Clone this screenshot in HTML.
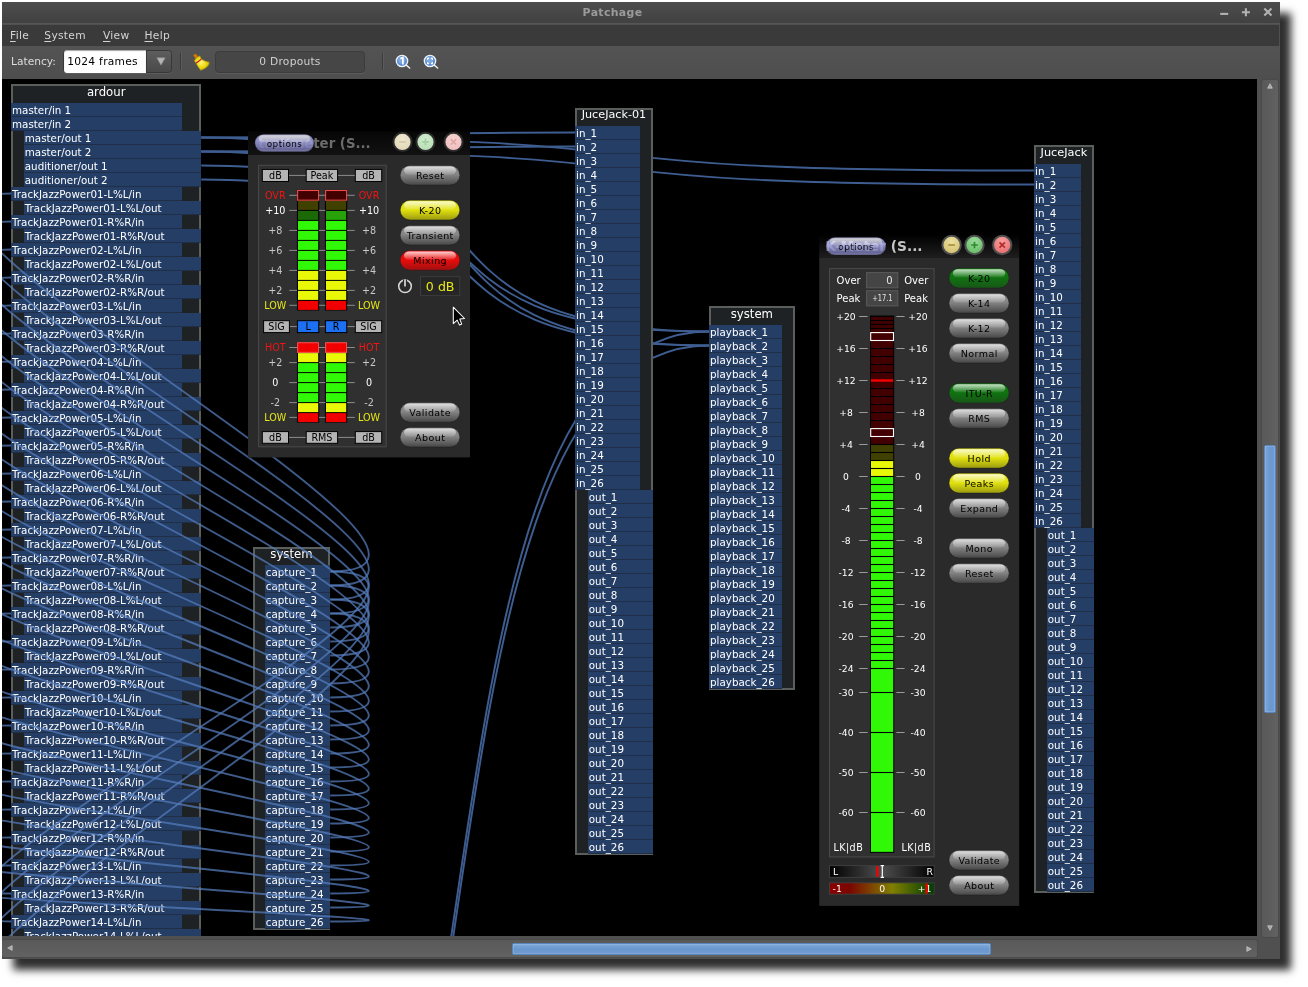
<!DOCTYPE html>
<html><head><meta charset="utf-8"><title>Patchage</title>
<style>
html,body{margin:0;padding:0;background:#fff;}
body{width:1308px;height:987px;overflow:hidden;position:relative;font-family:"DejaVu Sans","Liberation Sans",sans-serif;}
*{box-sizing:border-box;}
.abs{position:absolute;}
#win{position:absolute;left:2px;top:2px;width:1278px;height:957px;background:#505050;box-shadow:11px 11px 8px rgba(0,0,0,.82);overflow:hidden;}
#title{position:absolute;left:0;top:0;width:100%;height:22px;background:linear-gradient(#4d4d4d,#414141);border-bottom:1px solid #555;}
#title .t{position:absolute;left:0;width:1221px;top:3.5px;text-align:center;font-weight:bold;font-size:10.9px;letter-spacing:.35px;color:#9b9b9b;line-height:13px;}
#menubar{position:absolute;left:0;top:23px;width:1277px;height:21px;background:#3a3a3a;}
#menubar span{position:absolute;top:3.8px;font-size:10.67px;line-height:14px;color:#d4d4d4;letter-spacing:.3px;}
#menubar u{text-decoration:underline;text-underline-offset:1.5px;}
#toolbar{position:absolute;left:0;top:44px;width:1278px;height:33px;background:linear-gradient(#535353,#4e4e4e);}
#canvas{position:absolute;left:0px;top:77px;width:1255.3px;height:857px;background:#000;overflow:hidden;}
#cin{position:absolute;left:-2px;top:-79px;width:1308px;height:987px;}
.mod{position:absolute;background:#1e2224;border:2px solid #5b5f5b;}
.mt{position:absolute;left:0;right:0;text-align:center;color:#fff;font-size:11.7px;line-height:14px;white-space:nowrap;}
.p{position:absolute;height:14px;background:#243e66;color:#fff;font-size:10.32px;line-height:15.4px;white-space:nowrap;border-bottom:.9px solid #212e47;padding-left:.9px;overflow:visible;}
.p span{position:relative;z-index:1;}
svg.c{position:absolute;left:0;top:0;}
svg.f{z-index:2;}
svg.c path{fill:none;stroke-width:1.9;}
#cin,#title,#menubar,#toolbar{will-change:transform;}
</style></head><body>

<div id="win">
<div id="title"><div class="t">Patchage</div><svg class="abs" style="left:1210px;top:0" width="68" height="22" viewBox="1210 0 68 22"><g stroke="#b2b2b2" stroke-width="2.1" fill="none"><path d="M1218.2 11.9H1226.2"/><path d="M1239.9 10.3H1247.9M1243.9 6.3V14.3"/><path d="M1262.3 6.4L1269.5 13.6M1269.5 6.4L1262.3 13.6"/></g></svg></div>
<div id="menubar"><span style="left:8px"><u>F</u>ile</span><span style="left:42.3px"><u>S</u>ystem</span><span style="left:101px"><u>V</u>iew</span><span style="left:142.5px"><u>H</u>elp</span></div>
<div id="toolbar"><div class="abs" style="left:9px;top:10.299999999999997px;font-size:10.67px;line-height:12px;color:#dcdcdc">Latency:</div>
<div class="abs" style="left:61.3px;top:3.5px;width:109px;height:23.8px;border-radius:3.5px;background:linear-gradient(#5d5d5d,#4a4a4a);border:1px solid #383838;box-shadow:0 1px 0 rgba(255,255,255,.08)"></div>
<div class="abs" style="left:61.8px;top:4px;width:83.2px;height:22.8px;border-radius:3px 0 0 3px;background:#fff;border-right:1px solid #383838;box-shadow:inset 0 1px 1px rgba(0,0,0,.35)"></div>
<div class="abs" style="left:65.2px;top:9.600000000000001px;font-size:10.67px;line-height:12px;color:#000;letter-spacing:.28px">1024 frames</div>
<svg class="abs" style="left:153.5px;top:11px" width="10" height="9" viewBox="0 0 10 9"><path d="M0.8 0.8H9.2L5 8.2Z" fill="#b4b4b4" stroke="#8a8a8a" stroke-width=".6"/></svg>
<div class="abs" style="left:178px;top:7px;width:1px;height:17px;background:#3b3b3b"></div>
<div class="abs" style="left:179px;top:7px;width:1px;height:17px;background:#5c5c5c"></div>
<div class="abs" style="left:380px;top:7px;width:1px;height:17px;background:#3b3b3b"></div>
<div class="abs" style="left:381px;top:7px;width:1px;height:17px;background:#5c5c5c"></div>
<svg class="abs" style="left:188px;top:5px" width="22" height="22" viewBox="190 51 22 22">
<defs><radialGradient id="bg1" cx=".45" cy=".45" r=".6"><stop offset="0" stop-color="#fff27a"/><stop offset=".6" stop-color="#ecd90e"/><stop offset="1" stop-color="#c4ac00"/></radialGradient></defs>
<path d="M193.4 55.2Q194.6 53.2 196.6 54.6L199.2 58.4L196.6 60.2Z" fill="#d07d0c" stroke="#a65e06" stroke-width=".5"/>
<path d="M194.4 60.6Q196.4 57.4 199.8 56L201.2 59.2Q206 62 209.2 62.4Q209 67.2 200.6 70.2Q197.6 66 196.2 63.4Z" fill="url(#bg1)" stroke="#b9a406" stroke-width=".7"/>
<path d="M196 63.2L201.2 59.2" stroke="#c8201c" stroke-width="1.3" fill="none"/>
</svg>
<div class="abs" style="left:213px;top:5px;width:150px;height:22px;border-radius:3.5px;background:#464646;border:1px solid #3c3c3c;box-shadow:0 1px 0 rgba(255,255,255,.07);text-align:center;font-size:10.67px;line-height:19.5px;color:#cfcfcf;letter-spacing:.25px">0 Dropouts</div>
<svg class="abs" style="left:391px;top:6px" width="20" height="20" viewBox="393 52 20 20">
<path d="M406.3 65.2L409.6 68" stroke="#e8e8e8" stroke-width="1.6" stroke-linecap="round"/>
<circle cx="402" cy="61" r="5.7" fill="#5d8ed2" stroke="#eef2f8" stroke-width="1.3"/>
<circle cx="401.7" cy="60.2" r="3.6" fill="#9dc0ea" opacity=".55"/>
<path d="M400.4 58.6L402.9 57.6V64.4" stroke="#fff" stroke-width="1.7" fill="none"/></svg>
<svg class="abs" style="left:419px;top:6px" width="20" height="20" viewBox="421 52 20 20">
<path d="M434.3 65.2L437.6 68" stroke="#e8e8e8" stroke-width="1.6" stroke-linecap="round"/>
<circle cx="430" cy="61" r="5.7" fill="#5d8ed2" stroke="#eef2f8" stroke-width="1.3"/>
<circle cx="429.7" cy="60.2" r="3.6" fill="#9dc0ea" opacity=".55"/>
<path d="M427.6 59.7V58.4H429M431 58.4H432.4V59.7M432.4 62.3V63.6H431M429 63.6H427.6V62.3" stroke="#fff" stroke-width="1.2" fill="none"/></svg></div>
<div id="canvas"><div id="cin">
<svg class="c" width="1308" height="987" viewBox="0 0 1308 987">
<g stroke="#3e5d90">
<path d="M201.2 137.5C325.9 137.5 357.0 136.2 388.2 135.0C419.4 133.8 450.5 132.5 575.1 132.5"/>
<path d="M201.2 151.5C325.9 151.5 357.0 150.2 388.2 149.0C419.4 147.8 450.5 146.5 575.1 146.5"/>
<path d="M201.2 137.5C479.0 137.5 548.4 145.8 617.8 154.0C687.3 162.2 756.7 170.5 1034.4 170.5"/>
<path d="M201.2 151.5C479.0 151.5 548.4 159.8 617.8 168.0C687.3 176.2 756.7 184.5 1034.4 184.5"/>
<path d="M201.2 137.5C370.6 137.5 412.9 186.0 455.3 234.5C497.6 283.0 539.9 331.5 709.3 331.5"/>
<path d="M201.2 151.5C370.6 151.5 412.9 200.0 455.3 248.5C497.6 297.0 539.9 345.5 709.3 345.5"/>
<path d="M201.2 165.5C370.6 165.5 412.9 207.0 455.3 248.5C497.6 290.0 539.9 331.5 709.3 331.5"/>
<path d="M201.2 179.5C370.6 179.5 412.9 221.0 455.3 262.5C497.6 304.0 539.9 345.5 709.3 345.5"/>
<path d="M203.6 1471.1C372.2 1471.1 414.3 1186.2 456.4 901.3C498.6 616.4 540.7 331.5 709.3 331.5"/>
<path d="M203.6 1485.1C372.2 1485.1 414.3 1200.2 456.4 915.3C498.6 630.4 540.7 345.5 709.3 345.5"/>
</g></svg>
<div class="mod" style="left:11.20px;top:84.30px;width:190.05px;height:887.50px"><div class="mt" style="top:-1.3px;font-size:11.7px">ardour</div></div>
<div class="p" style="left:11.20px;top:103px;width:170.80px;"><span>master/in 1</span></div>
<div class="p" style="left:11.20px;top:117px;width:170.80px;"><span>master/in 2</span></div>
<div class="p" style="left:24.00px;top:131px;width:177.25px;padding-left:.8px;"><span>master/out 1</span></div>
<div class="p" style="left:24.00px;top:145px;width:177.25px;padding-left:.8px;"><span>master/out 2</span></div>
<div class="p" style="left:24.00px;top:159px;width:177.25px;padding-left:.8px;"><span>auditioner/out 1</span></div>
<div class="p" style="left:24.00px;top:173px;width:177.25px;padding-left:.8px;"><span>auditioner/out 2</span></div>
<div class="p" style="left:11.20px;top:187px;width:170.80px;"><span>TrackJazzPower01-L%L/in</span></div>
<div class="p" style="left:24.00px;top:201px;width:177.25px;padding-left:.8px;"><span>TrackJazzPower01-L%L/out</span></div>
<div class="p" style="left:11.20px;top:215px;width:170.80px;"><span>TrackJazzPower01-R%R/in</span></div>
<div class="p" style="left:24.00px;top:229px;width:177.25px;padding-left:.8px;"><span>TrackJazzPower01-R%R/out</span></div>
<div class="p" style="left:11.20px;top:243px;width:170.80px;"><span>TrackJazzPower02-L%L/in</span></div>
<div class="p" style="left:24.00px;top:257px;width:177.25px;padding-left:.8px;"><span>TrackJazzPower02-L%L/out</span></div>
<div class="p" style="left:11.20px;top:271px;width:170.80px;"><span>TrackJazzPower02-R%R/in</span></div>
<div class="p" style="left:24.00px;top:285px;width:177.25px;padding-left:.8px;"><span>TrackJazzPower02-R%R/out</span></div>
<div class="p" style="left:11.20px;top:299px;width:170.80px;"><span>TrackJazzPower03-L%L/in</span></div>
<div class="p" style="left:24.00px;top:313px;width:177.25px;padding-left:.8px;"><span>TrackJazzPower03-L%L/out</span></div>
<div class="p" style="left:11.20px;top:327px;width:170.80px;"><span>TrackJazzPower03-R%R/in</span></div>
<div class="p" style="left:24.00px;top:341px;width:177.25px;padding-left:.8px;"><span>TrackJazzPower03-R%R/out</span></div>
<div class="p" style="left:11.20px;top:355px;width:170.80px;"><span>TrackJazzPower04-L%L/in</span></div>
<div class="p" style="left:24.00px;top:369px;width:177.25px;padding-left:.8px;"><span>TrackJazzPower04-L%L/out</span></div>
<div class="p" style="left:11.20px;top:383px;width:170.80px;"><span>TrackJazzPower04-R%R/in</span></div>
<div class="p" style="left:24.00px;top:397px;width:177.25px;padding-left:.8px;"><span>TrackJazzPower04-R%R/out</span></div>
<div class="p" style="left:11.20px;top:411px;width:170.80px;"><span>TrackJazzPower05-L%L/in</span></div>
<div class="p" style="left:24.00px;top:425px;width:177.25px;padding-left:.8px;"><span>TrackJazzPower05-L%L/out</span></div>
<div class="p" style="left:11.20px;top:439px;width:170.80px;"><span>TrackJazzPower05-R%R/in</span></div>
<div class="p" style="left:24.00px;top:453px;width:177.25px;padding-left:.8px;"><span>TrackJazzPower05-R%R/out</span></div>
<div class="p" style="left:11.20px;top:467px;width:170.80px;"><span>TrackJazzPower06-L%L/in</span></div>
<div class="p" style="left:24.00px;top:481px;width:177.25px;padding-left:.8px;"><span>TrackJazzPower06-L%L/out</span></div>
<div class="p" style="left:11.20px;top:495px;width:170.80px;"><span>TrackJazzPower06-R%R/in</span></div>
<div class="p" style="left:24.00px;top:509px;width:177.25px;padding-left:.8px;"><span>TrackJazzPower06-R%R/out</span></div>
<div class="p" style="left:11.20px;top:523px;width:170.80px;"><span>TrackJazzPower07-L%L/in</span></div>
<div class="p" style="left:24.00px;top:537px;width:177.25px;padding-left:.8px;"><span>TrackJazzPower07-L%L/out</span></div>
<div class="p" style="left:11.20px;top:551px;width:170.80px;"><span>TrackJazzPower07-R%R/in</span></div>
<div class="p" style="left:24.00px;top:565px;width:177.25px;padding-left:.8px;"><span>TrackJazzPower07-R%R/out</span></div>
<div class="p" style="left:11.20px;top:579px;width:170.80px;"><span>TrackJazzPower08-L%L/in</span></div>
<div class="p" style="left:24.00px;top:593px;width:177.25px;padding-left:.8px;"><span>TrackJazzPower08-L%L/out</span></div>
<div class="p" style="left:11.20px;top:607px;width:170.80px;"><span>TrackJazzPower08-R%R/in</span></div>
<div class="p" style="left:24.00px;top:621px;width:177.25px;padding-left:.8px;"><span>TrackJazzPower08-R%R/out</span></div>
<div class="p" style="left:11.20px;top:635px;width:170.80px;"><span>TrackJazzPower09-L%L/in</span></div>
<div class="p" style="left:24.00px;top:649px;width:177.25px;padding-left:.8px;"><span>TrackJazzPower09-L%L/out</span></div>
<div class="p" style="left:11.20px;top:663px;width:170.80px;"><span>TrackJazzPower09-R%R/in</span></div>
<div class="p" style="left:24.00px;top:677px;width:177.25px;padding-left:.8px;"><span>TrackJazzPower09-R%R/out</span></div>
<div class="p" style="left:11.20px;top:691px;width:170.80px;"><span>TrackJazzPower10-L%L/in</span></div>
<div class="p" style="left:24.00px;top:705px;width:177.25px;padding-left:.8px;"><span>TrackJazzPower10-L%L/out</span></div>
<div class="p" style="left:11.20px;top:719px;width:170.80px;"><span>TrackJazzPower10-R%R/in</span></div>
<div class="p" style="left:24.00px;top:733px;width:177.25px;padding-left:.8px;"><span>TrackJazzPower10-R%R/out</span></div>
<div class="p" style="left:11.20px;top:747px;width:170.80px;"><span>TrackJazzPower11-L%L/in</span></div>
<div class="p" style="left:24.00px;top:761px;width:177.25px;padding-left:.8px;"><span>TrackJazzPower11-L%L/out</span></div>
<div class="p" style="left:11.20px;top:775px;width:170.80px;"><span>TrackJazzPower11-R%R/in</span></div>
<div class="p" style="left:24.00px;top:789px;width:177.25px;padding-left:.8px;"><span>TrackJazzPower11-R%R/out</span></div>
<div class="p" style="left:11.20px;top:803px;width:170.80px;"><span>TrackJazzPower12-L%L/in</span></div>
<div class="p" style="left:24.00px;top:817px;width:177.25px;padding-left:.8px;"><span>TrackJazzPower12-L%L/out</span></div>
<div class="p" style="left:11.20px;top:831px;width:170.80px;"><span>TrackJazzPower12-R%R/in</span></div>
<div class="p" style="left:24.00px;top:845px;width:177.25px;padding-left:.8px;"><span>TrackJazzPower12-R%R/out</span></div>
<div class="p" style="left:11.20px;top:859px;width:170.80px;"><span>TrackJazzPower13-L%L/in</span></div>
<div class="p" style="left:24.00px;top:873px;width:177.25px;padding-left:.8px;"><span>TrackJazzPower13-L%L/out</span></div>
<div class="p" style="left:11.20px;top:887px;width:170.80px;"><span>TrackJazzPower13-R%R/in</span></div>
<div class="p" style="left:24.00px;top:901px;width:177.25px;padding-left:.8px;"><span>TrackJazzPower13-R%R/out</span></div>
<div class="p" style="left:11.20px;top:915px;width:170.80px;"><span>TrackJazzPower14-L%L/in</span></div>
<div class="p" style="left:24.00px;top:929px;width:177.25px;padding-left:.8px;"><span>TrackJazzPower14-L%L/out</span></div>
<div class="p" style="left:11.20px;top:943px;width:170.80px;"><span>TrackJazzPower14-R%R/in</span></div>
<div class="p" style="left:24.00px;top:957px;width:177.25px;padding-left:.8px;"><span>TrackJazzPower14-R%R/out</span></div>
<div class="mod" style="left:252.70px;top:546.60px;width:77.50px;height:383.20px"><div class="mt" style="top:-1.3px;font-size:11.7px">system</div></div>
<div class="p" style="left:265.00px;top:565px;width:65.20px;padding-left:.8px;"><span>capture_1</span></div>
<div class="p" style="left:265.00px;top:579px;width:65.20px;padding-left:.8px;"><span>capture_2</span></div>
<div class="p" style="left:265.00px;top:593px;width:65.20px;padding-left:.8px;"><span>capture_3</span></div>
<div class="p" style="left:265.00px;top:607px;width:65.20px;padding-left:.8px;"><span>capture_4</span></div>
<div class="p" style="left:265.00px;top:621px;width:65.20px;padding-left:.8px;"><span>capture_5</span></div>
<div class="p" style="left:265.00px;top:635px;width:65.20px;padding-left:.8px;"><span>capture_6</span></div>
<div class="p" style="left:265.00px;top:649px;width:65.20px;padding-left:.8px;"><span>capture_7</span></div>
<div class="p" style="left:265.00px;top:663px;width:65.20px;padding-left:.8px;"><span>capture_8</span></div>
<div class="p" style="left:265.00px;top:677px;width:65.20px;padding-left:.8px;"><span>capture_9</span></div>
<div class="p" style="left:265.00px;top:691px;width:65.20px;padding-left:.8px;"><span>capture_10</span></div>
<div class="p" style="left:265.00px;top:705px;width:65.20px;padding-left:.8px;"><span>capture_11</span></div>
<div class="p" style="left:265.00px;top:719px;width:65.20px;padding-left:.8px;"><span>capture_12</span></div>
<div class="p" style="left:265.00px;top:733px;width:65.20px;padding-left:.8px;"><span>capture_13</span></div>
<div class="p" style="left:265.00px;top:747px;width:65.20px;padding-left:.8px;"><span>capture_14</span></div>
<div class="p" style="left:265.00px;top:761px;width:65.20px;padding-left:.8px;"><span>capture_15</span></div>
<div class="p" style="left:265.00px;top:775px;width:65.20px;padding-left:.8px;"><span>capture_16</span></div>
<div class="p" style="left:265.00px;top:789px;width:65.20px;padding-left:.8px;"><span>capture_17</span></div>
<div class="p" style="left:265.00px;top:803px;width:65.20px;padding-left:.8px;"><span>capture_18</span></div>
<div class="p" style="left:265.00px;top:817px;width:65.20px;padding-left:.8px;"><span>capture_19</span></div>
<div class="p" style="left:265.00px;top:831px;width:65.20px;padding-left:.8px;"><span>capture_20</span></div>
<div class="p" style="left:265.00px;top:845px;width:65.20px;padding-left:.8px;"><span>capture_21</span></div>
<div class="p" style="left:265.00px;top:859px;width:65.20px;padding-left:.8px;"><span>capture_22</span></div>
<div class="p" style="left:265.00px;top:873px;width:65.20px;padding-left:.8px;"><span>capture_23</span></div>
<div class="p" style="left:265.00px;top:887px;width:65.20px;padding-left:.8px;"><span>capture_24</span></div>
<div class="p" style="left:265.00px;top:901px;width:65.20px;padding-left:.8px;"><span>capture_25</span></div>
<div class="p" style="left:265.00px;top:915px;width:65.20px;padding-left:.8px;"><span>capture_26</span></div>
<div class="mod" style="left:575.15px;top:107.50px;width:77.65px;height:747.30px"><div class="mt" style="top:-1.3px;font-size:11.2px">JuceJack-01</div></div>
<div class="p" style="left:575.15px;top:126px;width:64.85px;"><span>in_1</span></div>
<div class="p" style="left:575.15px;top:140px;width:64.85px;"><span>in_2</span></div>
<div class="p" style="left:575.15px;top:154px;width:64.85px;"><span>in_3</span></div>
<div class="p" style="left:575.15px;top:168px;width:64.85px;"><span>in_4</span></div>
<div class="p" style="left:575.15px;top:182px;width:64.85px;"><span>in_5</span></div>
<div class="p" style="left:575.15px;top:196px;width:64.85px;"><span>in_6</span></div>
<div class="p" style="left:575.15px;top:210px;width:64.85px;"><span>in_7</span></div>
<div class="p" style="left:575.15px;top:224px;width:64.85px;"><span>in_8</span></div>
<div class="p" style="left:575.15px;top:238px;width:64.85px;"><span>in_9</span></div>
<div class="p" style="left:575.15px;top:252px;width:64.85px;"><span>in_10</span></div>
<div class="p" style="left:575.15px;top:266px;width:64.85px;"><span>in_11</span></div>
<div class="p" style="left:575.15px;top:280px;width:64.85px;"><span>in_12</span></div>
<div class="p" style="left:575.15px;top:294px;width:64.85px;"><span>in_13</span></div>
<div class="p" style="left:575.15px;top:308px;width:64.85px;"><span>in_14</span></div>
<div class="p" style="left:575.15px;top:322px;width:64.85px;"><span>in_15</span></div>
<div class="p" style="left:575.15px;top:336px;width:64.85px;"><span>in_16</span></div>
<div class="p" style="left:575.15px;top:350px;width:64.85px;"><span>in_17</span></div>
<div class="p" style="left:575.15px;top:364px;width:64.85px;"><span>in_18</span></div>
<div class="p" style="left:575.15px;top:378px;width:64.85px;"><span>in_19</span></div>
<div class="p" style="left:575.15px;top:392px;width:64.85px;"><span>in_20</span></div>
<div class="p" style="left:575.15px;top:406px;width:64.85px;"><span>in_21</span></div>
<div class="p" style="left:575.15px;top:420px;width:64.85px;"><span>in_22</span></div>
<div class="p" style="left:575.15px;top:434px;width:64.85px;"><span>in_23</span></div>
<div class="p" style="left:575.15px;top:448px;width:64.85px;"><span>in_24</span></div>
<div class="p" style="left:575.15px;top:462px;width:64.85px;"><span>in_25</span></div>
<div class="p" style="left:575.15px;top:476px;width:64.85px;"><span>in_26</span></div>
<div class="p" style="left:588.00px;top:490px;width:64.80px;padding-left:.8px;"><span>out_1</span></div>
<div class="p" style="left:588.00px;top:504px;width:64.80px;padding-left:.8px;"><span>out_2</span></div>
<div class="p" style="left:588.00px;top:518px;width:64.80px;padding-left:.8px;"><span>out_3</span></div>
<div class="p" style="left:588.00px;top:532px;width:64.80px;padding-left:.8px;"><span>out_4</span></div>
<div class="p" style="left:588.00px;top:546px;width:64.80px;padding-left:.8px;"><span>out_5</span></div>
<div class="p" style="left:588.00px;top:560px;width:64.80px;padding-left:.8px;"><span>out_6</span></div>
<div class="p" style="left:588.00px;top:574px;width:64.80px;padding-left:.8px;"><span>out_7</span></div>
<div class="p" style="left:588.00px;top:588px;width:64.80px;padding-left:.8px;"><span>out_8</span></div>
<div class="p" style="left:588.00px;top:602px;width:64.80px;padding-left:.8px;"><span>out_9</span></div>
<div class="p" style="left:588.00px;top:616px;width:64.80px;padding-left:.8px;"><span>out_10</span></div>
<div class="p" style="left:588.00px;top:630px;width:64.80px;padding-left:.8px;"><span>out_11</span></div>
<div class="p" style="left:588.00px;top:644px;width:64.80px;padding-left:.8px;"><span>out_12</span></div>
<div class="p" style="left:588.00px;top:658px;width:64.80px;padding-left:.8px;"><span>out_13</span></div>
<div class="p" style="left:588.00px;top:672px;width:64.80px;padding-left:.8px;"><span>out_14</span></div>
<div class="p" style="left:588.00px;top:686px;width:64.80px;padding-left:.8px;"><span>out_15</span></div>
<div class="p" style="left:588.00px;top:700px;width:64.80px;padding-left:.8px;"><span>out_16</span></div>
<div class="p" style="left:588.00px;top:714px;width:64.80px;padding-left:.8px;"><span>out_17</span></div>
<div class="p" style="left:588.00px;top:728px;width:64.80px;padding-left:.8px;"><span>out_18</span></div>
<div class="p" style="left:588.00px;top:742px;width:64.80px;padding-left:.8px;"><span>out_19</span></div>
<div class="p" style="left:588.00px;top:756px;width:64.80px;padding-left:.8px;"><span>out_20</span></div>
<div class="p" style="left:588.00px;top:770px;width:64.80px;padding-left:.8px;"><span>out_21</span></div>
<div class="p" style="left:588.00px;top:784px;width:64.80px;padding-left:.8px;"><span>out_22</span></div>
<div class="p" style="left:588.00px;top:798px;width:64.80px;padding-left:.8px;"><span>out_23</span></div>
<div class="p" style="left:588.00px;top:812px;width:64.80px;padding-left:.8px;"><span>out_24</span></div>
<div class="p" style="left:588.00px;top:826px;width:64.80px;padding-left:.8px;"><span>out_25</span></div>
<div class="p" style="left:588.00px;top:840px;width:64.80px;padding-left:.8px;"><span>out_26</span></div>
<div class="mod" style="left:709.20px;top:306.30px;width:85.40px;height:383.50px"><div class="mt" style="top:-1.3px;font-size:11.7px">system</div></div>
<div class="p" style="left:709.20px;top:325px;width:72.80px;"><span>playback_1</span></div>
<div class="p" style="left:709.20px;top:339px;width:72.80px;"><span>playback_2</span></div>
<div class="p" style="left:709.20px;top:353px;width:72.80px;"><span>playback_3</span></div>
<div class="p" style="left:709.20px;top:367px;width:72.80px;"><span>playback_4</span></div>
<div class="p" style="left:709.20px;top:381px;width:72.80px;"><span>playback_5</span></div>
<div class="p" style="left:709.20px;top:395px;width:72.80px;"><span>playback_6</span></div>
<div class="p" style="left:709.20px;top:409px;width:72.80px;"><span>playback_7</span></div>
<div class="p" style="left:709.20px;top:423px;width:72.80px;"><span>playback_8</span></div>
<div class="p" style="left:709.20px;top:437px;width:72.80px;"><span>playback_9</span></div>
<div class="p" style="left:709.20px;top:451px;width:72.80px;"><span>playback_10</span></div>
<div class="p" style="left:709.20px;top:465px;width:72.80px;"><span>playback_11</span></div>
<div class="p" style="left:709.20px;top:479px;width:72.80px;"><span>playback_12</span></div>
<div class="p" style="left:709.20px;top:493px;width:72.80px;"><span>playback_13</span></div>
<div class="p" style="left:709.20px;top:507px;width:72.80px;"><span>playback_14</span></div>
<div class="p" style="left:709.20px;top:521px;width:72.80px;"><span>playback_15</span></div>
<div class="p" style="left:709.20px;top:535px;width:72.80px;"><span>playback_16</span></div>
<div class="p" style="left:709.20px;top:549px;width:72.80px;"><span>playback_17</span></div>
<div class="p" style="left:709.20px;top:563px;width:72.80px;"><span>playback_18</span></div>
<div class="p" style="left:709.20px;top:577px;width:72.80px;"><span>playback_19</span></div>
<div class="p" style="left:709.20px;top:591px;width:72.80px;"><span>playback_20</span></div>
<div class="p" style="left:709.20px;top:605px;width:72.80px;"><span>playback_21</span></div>
<div class="p" style="left:709.20px;top:619px;width:72.80px;"><span>playback_22</span></div>
<div class="p" style="left:709.20px;top:633px;width:72.80px;"><span>playback_23</span></div>
<div class="p" style="left:709.20px;top:647px;width:72.80px;"><span>playback_24</span></div>
<div class="p" style="left:709.20px;top:661px;width:72.80px;"><span>playback_25</span></div>
<div class="p" style="left:709.20px;top:675px;width:72.80px;"><span>playback_26</span></div>
<div class="mod" style="left:1034.20px;top:145.20px;width:59.50px;height:747.60px"><div class="mt" style="top:-1.3px;font-size:11.3px">JuceJack</div></div>
<div class="p" style="left:1034.20px;top:164px;width:46.80px;"><span>in_1</span></div>
<div class="p" style="left:1034.20px;top:178px;width:46.80px;"><span>in_2</span></div>
<div class="p" style="left:1034.20px;top:192px;width:46.80px;"><span>in_3</span></div>
<div class="p" style="left:1034.20px;top:206px;width:46.80px;"><span>in_4</span></div>
<div class="p" style="left:1034.20px;top:220px;width:46.80px;"><span>in_5</span></div>
<div class="p" style="left:1034.20px;top:234px;width:46.80px;"><span>in_6</span></div>
<div class="p" style="left:1034.20px;top:248px;width:46.80px;"><span>in_7</span></div>
<div class="p" style="left:1034.20px;top:262px;width:46.80px;"><span>in_8</span></div>
<div class="p" style="left:1034.20px;top:276px;width:46.80px;"><span>in_9</span></div>
<div class="p" style="left:1034.20px;top:290px;width:46.80px;"><span>in_10</span></div>
<div class="p" style="left:1034.20px;top:304px;width:46.80px;"><span>in_11</span></div>
<div class="p" style="left:1034.20px;top:318px;width:46.80px;"><span>in_12</span></div>
<div class="p" style="left:1034.20px;top:332px;width:46.80px;"><span>in_13</span></div>
<div class="p" style="left:1034.20px;top:346px;width:46.80px;"><span>in_14</span></div>
<div class="p" style="left:1034.20px;top:360px;width:46.80px;"><span>in_15</span></div>
<div class="p" style="left:1034.20px;top:374px;width:46.80px;"><span>in_16</span></div>
<div class="p" style="left:1034.20px;top:388px;width:46.80px;"><span>in_17</span></div>
<div class="p" style="left:1034.20px;top:402px;width:46.80px;"><span>in_18</span></div>
<div class="p" style="left:1034.20px;top:416px;width:46.80px;"><span>in_19</span></div>
<div class="p" style="left:1034.20px;top:430px;width:46.80px;"><span>in_20</span></div>
<div class="p" style="left:1034.20px;top:444px;width:46.80px;"><span>in_21</span></div>
<div class="p" style="left:1034.20px;top:458px;width:46.80px;"><span>in_22</span></div>
<div class="p" style="left:1034.20px;top:472px;width:46.80px;"><span>in_23</span></div>
<div class="p" style="left:1034.20px;top:486px;width:46.80px;"><span>in_24</span></div>
<div class="p" style="left:1034.20px;top:500px;width:46.80px;"><span>in_25</span></div>
<div class="p" style="left:1034.20px;top:514px;width:46.80px;"><span>in_26</span></div>
<div class="p" style="left:1047.00px;top:528px;width:46.70px;padding-left:.8px;"><span>out_1</span></div>
<div class="p" style="left:1047.00px;top:542px;width:46.70px;padding-left:.8px;"><span>out_2</span></div>
<div class="p" style="left:1047.00px;top:556px;width:46.70px;padding-left:.8px;"><span>out_3</span></div>
<div class="p" style="left:1047.00px;top:570px;width:46.70px;padding-left:.8px;"><span>out_4</span></div>
<div class="p" style="left:1047.00px;top:584px;width:46.70px;padding-left:.8px;"><span>out_5</span></div>
<div class="p" style="left:1047.00px;top:598px;width:46.70px;padding-left:.8px;"><span>out_6</span></div>
<div class="p" style="left:1047.00px;top:612px;width:46.70px;padding-left:.8px;"><span>out_7</span></div>
<div class="p" style="left:1047.00px;top:626px;width:46.70px;padding-left:.8px;"><span>out_8</span></div>
<div class="p" style="left:1047.00px;top:640px;width:46.70px;padding-left:.8px;"><span>out_9</span></div>
<div class="p" style="left:1047.00px;top:654px;width:46.70px;padding-left:.8px;"><span>out_10</span></div>
<div class="p" style="left:1047.00px;top:668px;width:46.70px;padding-left:.8px;"><span>out_11</span></div>
<div class="p" style="left:1047.00px;top:682px;width:46.70px;padding-left:.8px;"><span>out_12</span></div>
<div class="p" style="left:1047.00px;top:696px;width:46.70px;padding-left:.8px;"><span>out_13</span></div>
<div class="p" style="left:1047.00px;top:710px;width:46.70px;padding-left:.8px;"><span>out_14</span></div>
<div class="p" style="left:1047.00px;top:724px;width:46.70px;padding-left:.8px;"><span>out_15</span></div>
<div class="p" style="left:1047.00px;top:738px;width:46.70px;padding-left:.8px;"><span>out_16</span></div>
<div class="p" style="left:1047.00px;top:752px;width:46.70px;padding-left:.8px;"><span>out_17</span></div>
<div class="p" style="left:1047.00px;top:766px;width:46.70px;padding-left:.8px;"><span>out_18</span></div>
<div class="p" style="left:1047.00px;top:780px;width:46.70px;padding-left:.8px;"><span>out_19</span></div>
<div class="p" style="left:1047.00px;top:794px;width:46.70px;padding-left:.8px;"><span>out_20</span></div>
<div class="p" style="left:1047.00px;top:808px;width:46.70px;padding-left:.8px;"><span>out_21</span></div>
<div class="p" style="left:1047.00px;top:822px;width:46.70px;padding-left:.8px;"><span>out_22</span></div>
<div class="p" style="left:1047.00px;top:836px;width:46.70px;padding-left:.8px;"><span>out_23</span></div>
<div class="p" style="left:1047.00px;top:850px;width:46.70px;padding-left:.8px;"><span>out_24</span></div>
<div class="p" style="left:1047.00px;top:864px;width:46.70px;padding-left:.8px;"><span>out_25</span></div>
<div class="p" style="left:1047.00px;top:878px;width:46.70px;padding-left:.8px;"><span>out_26</span></div>
<svg class="c f" width="1308" height="987" viewBox="0 0 1308 987">
<g stroke="rgba(85,124,188,.735)">
<path d="M330.2 571.5C436.5 571.5 303.6 477.0 170.7 382.5C37.8 288.0 -95.1 193.5 11.2 193.5"/>
<path d="M330.2 585.5C436.5 585.5 303.6 494.5 170.7 403.5C37.8 312.5 -95.1 221.5 11.2 221.5"/>
<path d="M330.2 599.5C436.5 599.5 303.6 512.0 170.7 424.5C37.8 337.0 -95.1 249.5 11.2 249.5"/>
<path d="M330.2 613.5C436.5 613.5 303.6 529.5 170.7 445.5C37.8 361.5 -95.1 277.5 11.2 277.5"/>
<path d="M330.2 627.5C436.5 627.5 303.6 547.0 170.7 466.5C37.8 386.0 -95.1 305.5 11.2 305.5"/>
<path d="M330.2 641.5C436.5 641.5 303.6 564.5 170.7 487.5C37.8 410.5 -95.1 333.5 11.2 333.5"/>
<path d="M330.2 655.5C436.5 655.5 303.6 582.0 170.7 508.5C37.8 435.0 -95.1 361.5 11.2 361.5"/>
<path d="M330.2 669.5C436.5 669.5 303.6 599.5 170.7 529.5C37.8 459.5 -95.1 389.5 11.2 389.5"/>
<path d="M330.2 683.5C436.5 683.5 303.6 617.0 170.7 550.5C37.8 484.0 -95.1 417.5 11.2 417.5"/>
<path d="M330.2 697.5C436.5 697.5 303.6 634.5 170.7 571.5C37.8 508.5 -95.1 445.5 11.2 445.5"/>
<path d="M330.2 711.5C436.5 711.5 303.6 652.0 170.7 592.5C37.8 533.0 -95.1 473.5 11.2 473.5"/>
<path d="M330.2 725.5C436.5 725.5 303.6 669.5 170.7 613.5C37.8 557.5 -95.1 501.5 11.2 501.5"/>
<path d="M330.2 739.5C436.5 739.5 303.6 687.0 170.7 634.5C37.8 582.0 -95.1 529.5 11.2 529.5"/>
<path d="M330.2 753.5C436.5 753.5 303.6 704.5 170.7 655.5C37.8 606.5 -95.1 557.5 11.2 557.5"/>
<path d="M330.2 767.5C436.5 767.5 303.6 722.0 170.7 676.5C37.8 631.0 -95.1 585.5 11.2 585.5"/>
<path d="M330.2 781.5C436.5 781.5 303.6 739.5 170.7 697.5C37.8 655.5 -95.1 613.5 11.2 613.5"/>
<path d="M330.2 795.5C436.5 795.5 303.6 757.0 170.7 718.5C37.8 680.0 -95.1 641.5 11.2 641.5"/>
<path d="M330.2 809.5C436.5 809.5 303.6 774.5 170.7 739.5C37.8 704.5 -95.1 669.5 11.2 669.5"/>
<path d="M330.2 823.5C436.5 823.5 303.6 792.0 170.7 760.5C37.8 729.0 -95.1 697.5 11.2 697.5"/>
<path d="M330.2 837.5C436.5 837.5 303.6 809.5 170.7 781.5C37.8 753.5 -95.1 725.5 11.2 725.5"/>
<path d="M330.2 851.5C436.5 851.5 303.6 827.0 170.7 802.5C37.8 778.0 -95.1 753.5 11.2 753.5"/>
<path d="M330.2 865.5C436.5 865.5 303.6 844.5 170.7 823.5C37.8 802.5 -95.1 781.5 11.2 781.5"/>
<path d="M330.2 879.5C436.5 879.5 303.6 862.0 170.7 844.5C37.8 827.0 -95.1 809.5 11.2 809.5"/>
<path d="M330.2 893.5C436.5 893.5 303.6 879.5 170.7 865.5C37.8 851.5 -95.1 837.5 11.2 837.5"/>
<path d="M330.2 907.5C436.5 907.5 303.6 897.0 170.7 886.5C37.8 876.0 -95.1 865.5 11.2 865.5"/>
<path d="M330.2 921.5C436.5 921.5 303.6 914.5 170.7 907.5C37.8 900.5 -95.1 893.5 11.2 893.5"/>
<path d="M330.2 571.5C436.5 571.5 303.6 659.0 170.7 746.5C37.8 834.0 -95.1 921.5 11.2 921.5"/>
<path d="M330.2 585.5C436.5 585.5 303.6 676.5 170.7 767.5C37.8 858.5 -95.1 949.5 11.2 949.5"/>
<path d="M330.2 599.5C436.5 599.5 303.6 694.0 170.7 788.5C37.8 883.0 -95.1 977.5 11.2 977.5"/>
<path d="M330.2 613.5C436.5 613.5 303.6 711.5 170.7 809.5C37.8 907.5 -95.1 1005.5 11.2 1005.5"/>
</g></svg>
<svg class="abs" style="left:0;top:0;z-index:3;font-family:'DejaVu Sans','Liberation Sans',sans-serif" width="1308" height="987" viewBox="0 0 1308 987"><defs>
<linearGradient id="g_grey" x1="0" y1="0" x2="0" y2="1"><stop offset="0" stop-color="#8e8e8e"/><stop offset=".45" stop-color="#868686"/><stop offset=".8" stop-color="#5e5e5e"/><stop offset="1" stop-color="#464646"/></linearGradient>
<linearGradient id="g_green" x1="0" y1="0" x2="0" y2="1"><stop offset="0" stop-color="#0e7e0e"/><stop offset=".45" stop-color="#107410"/><stop offset="1" stop-color="#185618"/></linearGradient>
<linearGradient id="g_yellow" x1="0" y1="0" x2="0" y2="1"><stop offset="0" stop-color="#e6e614"/><stop offset=".5" stop-color="#e0e010"/><stop offset="1" stop-color="#9a9a10"/></linearGradient>
<linearGradient id="g_red" x1="0" y1="0" x2="0" y2="1"><stop offset="0" stop-color="#ee1010"/><stop offset=".5" stop-color="#e60c0c"/><stop offset="1" stop-color="#a01010"/></linearGradient>
<linearGradient id="g_lav" x1="0" y1="0" x2="0" y2="1"><stop offset="0" stop-color="#b0b0ea"/><stop offset=".45" stop-color="#a0a0dc"/><stop offset=".85" stop-color="#7676b0"/><stop offset="1" stop-color="#9090c8"/></linearGradient>
<linearGradient id="gloss_grey" x1="0" y1="0" x2="0" y2="1"><stop offset="0" stop-color="#fff" stop-opacity=".72"/><stop offset="1" stop-color="#fff" stop-opacity=".1"/></linearGradient>
<linearGradient id="gloss_green" x1="0" y1="0" x2="0" y2="1"><stop offset="0" stop-color="#fff" stop-opacity=".78"/><stop offset="1" stop-color="#fff" stop-opacity=".05"/></linearGradient>
<linearGradient id="gloss_yellow" x1="0" y1="0" x2="0" y2="1"><stop offset="0" stop-color="#fff" stop-opacity=".8"/><stop offset="1" stop-color="#fff" stop-opacity=".1"/></linearGradient>
<linearGradient id="gloss_red" x1="0" y1="0" x2="0" y2="1"><stop offset="0" stop-color="#fff" stop-opacity=".8"/><stop offset="1" stop-color="#fff" stop-opacity=".08"/></linearGradient>
<linearGradient id="gloss_lav" x1="0" y1="0" x2="0" y2="1"><stop offset="0" stop-color="#fff" stop-opacity=".92"/><stop offset="1" stop-color="#fff" stop-opacity=".18"/></linearGradient>
<linearGradient id="tb2" x1="0" y1="0" x2="0" y2="1"><stop offset="0" stop-color="#000"/><stop offset="1" stop-color="#1e1e1e"/></linearGradient>
<linearGradient id="tb1" x1="0" y1="0" x2="0" y2="1"><stop offset="0" stop-color="#060606"/><stop offset="1" stop-color="#121212"/></linearGradient>
<linearGradient id="lr" x1="0" y1="0" x2="1" y2="0"><stop offset="0" stop-color="#000"/><stop offset=".5" stop-color="#4e4e4e"/><stop offset="1" stop-color="#000"/></linearGradient>
<linearGradient id="corr" x1="0" y1="0" x2="1" y2="0"><stop offset="0" stop-color="#8c0000"/><stop offset=".2" stop-color="#7a0800"/><stop offset=".6" stop-color="#808000"/><stop offset="1" stop-color="#003c00"/></linearGradient>
<radialGradient id="b_min" cx=".5" cy=".3" r=".75"><stop offset="0" stop-color="#ece0a0"/><stop offset="1" stop-color="#d0be6a"/></radialGradient>
<radialGradient id="b_max" cx=".5" cy=".3" r=".75"><stop offset="0" stop-color="#9cdc9c"/><stop offset="1" stop-color="#60b860"/></radialGradient>
<radialGradient id="b_cls" cx=".5" cy=".3" r=".75"><stop offset="0" stop-color="#f6a0a0"/><stop offset="1" stop-color="#e46868"/></radialGradient>
<radialGradient id="c_min" cx=".5" cy=".35" r=".7"><stop offset="0" stop-color="#efe8d0"/><stop offset="1" stop-color="#e0d6b4"/></radialGradient>
<radialGradient id="c_max" cx=".5" cy=".35" r=".7"><stop offset="0" stop-color="#d2ecd0"/><stop offset="1" stop-color="#b4dcb2"/></radialGradient>
<radialGradient id="c_cls" cx=".5" cy=".35" r=".7"><stop offset="0" stop-color="#f6d2d2"/><stop offset="1" stop-color="#eebcbc"/></radialGradient>
</defs><rect x="248" y="131.4" width="222" height="24" fill="url(#tb1)"/>
<rect x="248" y="155" width="222" height="302.4" fill="#2a2a2a"/>
<text x="258.2" y="148" font-size="13.3" font-weight="bold" fill="#6c6c6c">traKmeter (S...</text>
<g opacity=".86"><rect x="254.80" y="134.20" width="59.20" height="17.60" rx="8.80" fill="url(#g_lav)" stroke="#1b1b1b" stroke-opacity=".55" stroke-width=".8"/><rect x="258.60" y="135.20" width="51.60" height="7.39" rx="4.58" fill="url(#gloss_lav)"/><text x="284.60" y="146.70" font-size="8.9" letter-spacing=".42" text-anchor="middle" fill="#000">options</text></g>
<circle cx="402.5" cy="141.9" r="9.10" fill="url(#c_min)" stroke="#2c2c2c" stroke-width="2"/><path d="M399.2 141.9H405.8" stroke="#d2c8a6" stroke-width="1.7"/><circle cx="425.5" cy="141.9" r="9.10" fill="url(#c_max)" stroke="#2c2c2c" stroke-width="2"/><path d="M422.2 141.9H428.8M425.5 138.6V145.20000000000002" stroke="#a2cfa0" stroke-width="1.7"/><circle cx="453.5" cy="141.9" r="9.10" fill="url(#c_cls)" stroke="#2c2c2c" stroke-width="2"/><path d="M450.8 139.20000000000002L456.2 144.6M456.2 139.20000000000002L450.8 144.6" stroke="#e2a6a6" stroke-width="1.7"/>
<rect x="258.6" y="165.3" width="127.6" height="281.5" fill="#303030" stroke="#4b4b4b" stroke-width="1"/>
<path d="M288 175.4H306M337 175.4H355.5" stroke="#8c8c8c" stroke-width="1"/>
<rect x="262.30" y="169.40" width="26.20" height="12.10" fill="#b4b4b4" stroke="#000" stroke-width="1"/><text x="275.40" y="178.91" font-size="9.6" text-anchor="middle" fill="#000">dB</text>
<rect x="306.20" y="169.40" width="31.40" height="12.10" fill="#b4b4b4" stroke="#000" stroke-width="1"/><text x="321.90" y="178.91" font-size="9.6" text-anchor="middle" fill="#000">Peak</text>
<rect x="355.30" y="169.40" width="26.40" height="12.10" fill="#b4b4b4" stroke="#000" stroke-width="1"/><text x="368.50" y="178.91" font-size="9.6" text-anchor="middle" fill="#000">dB</text>
<rect x="296.9" y="189.8" width="22.400000000000034" height="120.6" fill="#000"/>
<rect x="297.59999999999997" y="190.5" width="21.000000000000036" height="9.7" fill="#420000" stroke="#f24a4a" stroke-width="1.1"/>
<rect x="298.0" y="200.9" width="20.200000000000035" height="9.0" fill="#404000"/>
<rect x="298.0" y="210.9" width="20.200000000000035" height="9.0" fill="#1c6a06"/>
<rect x="298.0" y="220.9" width="20.200000000000035" height="9.0" fill="#30f806"/>
<rect x="298.0" y="230.9" width="20.200000000000035" height="9.0" fill="#30f806"/>
<rect x="298.0" y="240.9" width="20.200000000000035" height="9.0" fill="#30f806"/>
<rect x="298.0" y="250.9" width="20.200000000000035" height="9.0" fill="#30f806"/>
<rect x="298.0" y="260.90000000000003" width="20.200000000000035" height="9.0" fill="#30f806"/>
<rect x="298.0" y="270.90000000000003" width="20.200000000000035" height="9.0" fill="#e8f806"/>
<rect x="298.0" y="280.90000000000003" width="20.200000000000035" height="9.0" fill="#e8f806"/>
<rect x="298.0" y="290.90000000000003" width="20.200000000000035" height="9.0" fill="#e8f806"/>
<rect x="298.0" y="300.90000000000003" width="20.200000000000035" height="9.0" fill="#f20000"/>
<rect x="324.9" y="189.8" width="22.400000000000034" height="120.6" fill="#000"/>
<rect x="325.59999999999997" y="190.5" width="21.000000000000036" height="9.7" fill="#420000" stroke="#f24a4a" stroke-width="1.1"/>
<rect x="326.0" y="200.9" width="20.200000000000035" height="9.0" fill="#404000"/>
<rect x="326.0" y="210.9" width="20.200000000000035" height="9.0" fill="#28a20a"/>
<rect x="326.0" y="220.9" width="20.200000000000035" height="9.0" fill="#30f806"/>
<rect x="326.0" y="230.9" width="20.200000000000035" height="9.0" fill="#30f806"/>
<rect x="326.0" y="240.9" width="20.200000000000035" height="9.0" fill="#30f806"/>
<rect x="326.0" y="250.9" width="20.200000000000035" height="9.0" fill="#30f806"/>
<rect x="326.0" y="260.90000000000003" width="20.200000000000035" height="9.0" fill="#30f806"/>
<rect x="326.0" y="270.90000000000003" width="20.200000000000035" height="9.0" fill="#e8f806"/>
<rect x="326.0" y="280.90000000000003" width="20.200000000000035" height="9.0" fill="#e8f806"/>
<rect x="326.0" y="290.90000000000003" width="20.200000000000035" height="9.0" fill="#e8f806"/>
<rect x="326.0" y="300.90000000000003" width="20.200000000000035" height="9.0" fill="#f20000"/>
<path d="M289.3 195.3H297M319 195.3H325.4M347 195.3H354.8" stroke="#8c8c8c" stroke-width="1"/>
<text x="275.3" y="198.76" font-size="9.6" text-anchor="middle" fill="#f01414">OVR</text><text x="369" y="198.76" font-size="9.6" text-anchor="middle" fill="#f01414">OVR</text>
<path d="M289.3 210.4H297M319 210.4H325.4M347 210.4H354.8" stroke="#8c8c8c" stroke-width="1"/>
<text x="275.3" y="213.86" font-size="9.6" text-anchor="middle" fill="#fff">+10</text><text x="369" y="213.86" font-size="9.6" text-anchor="middle" fill="#fff">+10</text>
<path d="M289.3 230.4H297M319 230.4H325.4M347 230.4H354.8" stroke="#8c8c8c" stroke-width="1"/>
<text x="275.3" y="233.86" font-size="9.6" text-anchor="middle" fill="#c8c8c8">+8</text><text x="369" y="233.86" font-size="9.6" text-anchor="middle" fill="#c8c8c8">+8</text>
<path d="M289.3 250.4H297M319 250.4H325.4M347 250.4H354.8" stroke="#8c8c8c" stroke-width="1"/>
<text x="275.3" y="253.86" font-size="9.6" text-anchor="middle" fill="#c8c8c8">+6</text><text x="369" y="253.86" font-size="9.6" text-anchor="middle" fill="#c8c8c8">+6</text>
<path d="M289.3 270.4H297M319 270.4H325.4M347 270.4H354.8" stroke="#8c8c8c" stroke-width="1"/>
<text x="275.3" y="273.86" font-size="9.6" text-anchor="middle" fill="#c8c8c8">+4</text><text x="369" y="273.86" font-size="9.6" text-anchor="middle" fill="#c8c8c8">+4</text>
<path d="M289.3 290.4H297M319 290.4H325.4M347 290.4H354.8" stroke="#8c8c8c" stroke-width="1"/>
<text x="275.3" y="293.86" font-size="9.6" text-anchor="middle" fill="#c8c8c8">+2</text><text x="369" y="293.86" font-size="9.6" text-anchor="middle" fill="#c8c8c8">+2</text>
<path d="M289.3 305.3H297M319 305.3H325.4M347 305.3H354.8" stroke="#8c8c8c" stroke-width="1"/>
<text x="275.3" y="308.76" font-size="9.6" text-anchor="middle" fill="#e6e614">LOW</text><text x="369" y="308.76" font-size="9.6" text-anchor="middle" fill="#e6e614">LOW</text>
<path d="M289.5 326.6H297.4M319 326.6H325.4M347 326.6H355.3" stroke="#8c8c8c" stroke-width="1"/>
<rect x="263.60" y="320.70" width="25.80" height="11.90" fill="#b4b4b4" stroke="#000" stroke-width="1"/><text x="276.50" y="330.11" font-size="9.6" text-anchor="middle" fill="#000">SIG</text>
<rect x="297.40" y="320.70" width="21.40" height="11.90" fill="#1e70f2" stroke="#000" stroke-width="1"/><text x="308.10" y="330.11" font-size="9.6" text-anchor="middle" fill="#000">L</text>
<rect x="325.40" y="320.70" width="21.40" height="11.90" fill="#1e70f2" stroke="#000" stroke-width="1"/><text x="336.10" y="330.11" font-size="9.6" text-anchor="middle" fill="#000">R</text>
<rect x="355.30" y="320.70" width="26.40" height="11.90" fill="#b4b4b4" stroke="#000" stroke-width="1"/><text x="368.50" y="330.11" font-size="9.6" text-anchor="middle" fill="#000">SIG</text>
<rect x="296.9" y="342.0" width="22.400000000000034" height="80.6" fill="#000"/>
<rect x="297.59999999999997" y="342.7" width="21.000000000000036" height="9.7" fill="#f20000" stroke="#f85050" stroke-width="1.1"/>
<rect x="298.0" y="353.1" width="20.200000000000035" height="9.0" fill="#e8f806"/>
<rect x="298.0" y="363.1" width="20.200000000000035" height="9.0" fill="#30f806"/>
<rect x="298.0" y="373.1" width="20.200000000000035" height="9.0" fill="#30f806"/>
<rect x="298.0" y="383.1" width="20.200000000000035" height="9.0" fill="#30f806"/>
<rect x="298.0" y="393.1" width="20.200000000000035" height="9.0" fill="#30f806"/>
<rect x="298.0" y="403.1" width="20.200000000000035" height="9.0" fill="#e8f806"/>
<rect x="298.0" y="413.1" width="20.200000000000035" height="9.0" fill="#f20000"/>
<rect x="324.9" y="342.0" width="22.400000000000034" height="80.6" fill="#000"/>
<rect x="325.59999999999997" y="342.7" width="21.000000000000036" height="9.7" fill="#f20000" stroke="#f85050" stroke-width="1.1"/>
<rect x="326.0" y="353.1" width="20.200000000000035" height="9.0" fill="#e8f806"/>
<rect x="326.0" y="363.1" width="20.200000000000035" height="9.0" fill="#30f806"/>
<rect x="326.0" y="373.1" width="20.200000000000035" height="9.0" fill="#30f806"/>
<rect x="326.0" y="383.1" width="20.200000000000035" height="9.0" fill="#30f806"/>
<rect x="326.0" y="393.1" width="20.200000000000035" height="9.0" fill="#30f806"/>
<rect x="326.0" y="403.1" width="20.200000000000035" height="9.0" fill="#e8f806"/>
<rect x="326.0" y="413.1" width="20.200000000000035" height="9.0" fill="#f20000"/>
<path d="M289.3 347.5H297M319 347.5H325.4M347 347.5H354.8" stroke="#8c8c8c" stroke-width="1"/>
<text x="275.3" y="350.96" font-size="9.6" text-anchor="middle" fill="#f01414">HOT</text><text x="369" y="350.96" font-size="9.6" text-anchor="middle" fill="#f01414">HOT</text>
<path d="M289.3 362.6H297M319 362.6H325.4M347 362.6H354.8" stroke="#8c8c8c" stroke-width="1"/>
<text x="275.3" y="366.06" font-size="9.6" text-anchor="middle" fill="#c8c8c8">+2</text><text x="369" y="366.06" font-size="9.6" text-anchor="middle" fill="#c8c8c8">+2</text>
<path d="M289.3 382.6H297M319 382.6H325.4M347 382.6H354.8" stroke="#8c8c8c" stroke-width="1"/>
<text x="275.3" y="386.06" font-size="9.6" text-anchor="middle" fill="#fff">0</text><text x="369" y="386.06" font-size="9.6" text-anchor="middle" fill="#fff">0</text>
<path d="M289.3 402.6H297M319 402.6H325.4M347 402.6H354.8" stroke="#8c8c8c" stroke-width="1"/>
<text x="275.3" y="406.06" font-size="9.6" text-anchor="middle" fill="#c8c8c8">-2</text><text x="369" y="406.06" font-size="9.6" text-anchor="middle" fill="#c8c8c8">-2</text>
<path d="M289.3 417.4H297M319 417.4H325.4M347 417.4H354.8" stroke="#8c8c8c" stroke-width="1"/>
<text x="275.3" y="420.86" font-size="9.6" text-anchor="middle" fill="#e6e614">LOW</text><text x="369" y="420.86" font-size="9.6" text-anchor="middle" fill="#e6e614">LOW</text>
<path d="M288 437.4H306M337 437.4H355.5" stroke="#8c8c8c" stroke-width="1"/>
<rect x="262.30" y="431.60" width="26.20" height="11.70" fill="#b4b4b4" stroke="#000" stroke-width="1"/><text x="275.40" y="440.91" font-size="9.6" text-anchor="middle" fill="#000">dB</text>
<rect x="306.20" y="431.60" width="31.40" height="11.70" fill="#b4b4b4" stroke="#000" stroke-width="1"/><text x="321.90" y="440.91" font-size="9.6" text-anchor="middle" fill="#000">RMS</text>
<rect x="355.30" y="431.60" width="26.40" height="11.70" fill="#b4b4b4" stroke="#000" stroke-width="1"/><text x="368.50" y="440.91" font-size="9.6" text-anchor="middle" fill="#000">dB</text>
<rect x="400.20" y="165.50" width="59.60" height="19.60" rx="9.80" fill="url(#g_grey)" stroke="#1b1b1b" stroke-opacity=".55" stroke-width=".8"/><rect x="404.00" y="166.50" width="52.00" height="8.23" rx="5.10" fill="url(#gloss_grey)"/><text x="430.20" y="179.22" font-size="9.5" letter-spacing=".42" text-anchor="middle" fill="#000">Reset</text>
<rect x="400.20" y="200.30" width="59.60" height="19.60" rx="9.80" fill="url(#g_yellow)" stroke="#1b1b1b" stroke-opacity=".55" stroke-width=".8"/><rect x="404.00" y="201.30" width="52.00" height="8.23" rx="5.10" fill="url(#gloss_yellow)"/><text x="430.20" y="214.02" font-size="9.5" letter-spacing=".42" text-anchor="middle" fill="#000">K-20</text>
<rect x="400.20" y="225.50" width="59.60" height="19.60" rx="9.80" fill="url(#g_grey)" stroke="#1b1b1b" stroke-opacity=".55" stroke-width=".8"/><rect x="404.00" y="226.50" width="52.00" height="8.23" rx="5.10" fill="url(#gloss_grey)"/><text x="430.20" y="239.22" font-size="9.5" letter-spacing=".42" text-anchor="middle" fill="#000">Transient</text>
<rect x="400.20" y="250.60" width="59.60" height="19.60" rx="9.80" fill="url(#g_red)" stroke="#1b1b1b" stroke-opacity=".55" stroke-width=".8"/><rect x="404.00" y="251.60" width="52.00" height="8.23" rx="5.10" fill="url(#gloss_red)"/><text x="430.20" y="264.32" font-size="9.5" letter-spacing=".42" text-anchor="middle" fill="#000">Mixing</text>
<rect x="400.20" y="402.60" width="59.60" height="19.60" rx="9.80" fill="url(#g_grey)" stroke="#1b1b1b" stroke-opacity=".55" stroke-width=".8"/><rect x="404.00" y="403.60" width="52.00" height="8.23" rx="5.10" fill="url(#gloss_grey)"/><text x="430.20" y="416.32" font-size="9.5" letter-spacing=".42" text-anchor="middle" fill="#000">Validate</text>
<rect x="400.20" y="427.40" width="59.60" height="19.60" rx="9.80" fill="url(#g_grey)" stroke="#1b1b1b" stroke-opacity=".55" stroke-width=".8"/><rect x="404.00" y="428.40" width="52.00" height="8.23" rx="5.10" fill="url(#gloss_grey)"/><text x="430.20" y="441.12" font-size="9.5" letter-spacing=".42" text-anchor="middle" fill="#000">About</text>
<circle cx="405" cy="286.3" r="6.3" fill="none" stroke="#d8d8d8" stroke-width="1.5"/><path d="M405 279.6V286.2" stroke="#2b2b2b" stroke-width="4"/><path d="M405 279.4V286.4" stroke="#d8d8d8" stroke-width="1.7"/>
<rect x="420.5" y="276.6" width="39.3" height="19" fill="#262626" stroke="#3c3c3c" stroke-width="1"/>
<text x="440.2" y="290.9" font-size="12.6" text-anchor="middle" fill="#eaea14">0 dB</text><rect x="819.2" y="234.5" width="200" height="23.3" fill="url(#tb2)"/>
<rect x="819.2" y="257.7" width="200" height="648.2" fill="#2a2a2a"/>
<text x="825.5" y="251.2" font-size="13.7" font-weight="bold" fill="#c6c6c6">K-Meter (S...</text>
<g opacity=".84"><rect x="826.00" y="237.20" width="59.90" height="17.90" rx="8.95" fill="url(#g_lav)" stroke="#1b1b1b" stroke-opacity=".55" stroke-width=".8"/><rect x="829.80" y="238.20" width="52.30" height="7.52" rx="4.65" fill="url(#gloss_lav)"/><text x="856.15" y="249.85" font-size="8.9" letter-spacing=".42" text-anchor="middle" fill="#000">options</text></g>
<circle cx="951.6" cy="245" r="9.20" fill="url(#b_min)" stroke="#4e4e4e" stroke-width="2"/><path d="M948.3000000000001 245H954.9" stroke="#a8903a" stroke-width="1.7"/><circle cx="974.5" cy="245" r="9.20" fill="url(#b_max)" stroke="#4e4e4e" stroke-width="2"/><path d="M971.2 245H977.8M974.5 241.7V248.3" stroke="#2f8a2f" stroke-width="1.7"/><circle cx="1002.2" cy="245" r="9.20" fill="url(#b_cls)" stroke="#4e4e4e" stroke-width="2"/><path d="M999.5 242.3L1004.9000000000001 247.7M1004.9000000000001 242.3L999.5 247.7" stroke="#b42a2a" stroke-width="1.7"/>
<rect x="829.5" y="268.6" width="104.6" height="588.3" fill="#303030" stroke="#4b4b4b" stroke-width="1"/>
<text x="836.6" y="283.8" font-size="10" fill="#fff">Over</text>
<text x="904.2" y="283.8" font-size="10" fill="#fff">Over</text>
<rect x="866.6" y="272.59999999999997" width="31.2" height="15.2" fill="#454545" stroke="#5a5a5a" stroke-width="1"/>
<text x="892.6" y="283.80" font-size="10" text-anchor="end" fill="#e6e6e6">0</text>
<text x="836.6" y="301.90000000000003" font-size="10" fill="#fff">Peak</text>
<text x="904.2" y="301.90000000000003" font-size="10" fill="#fff">Peak</text>
<rect x="866.6" y="290.7" width="31.2" height="15.2" fill="#454545" stroke="#5a5a5a" stroke-width="1"/>
<text x="892.6" y="301.25" font-size="8.2" text-anchor="end" fill="#e6e6e6" textLength="20.4" lengthAdjust="spacingAndGlyphs">+17.1</text>
<rect x="870.0" y="315.5" width="24.199999999999978" height="537.3" fill="#000"/>
<rect x="871.0" y="317.05" width="22.199999999999978" height="2.90" fill="#420000"/>
<rect x="871.0" y="321.05" width="22.199999999999978" height="2.90" fill="#420000"/>
<rect x="871.0" y="325.05" width="22.199999999999978" height="2.90" fill="#420000"/>
<rect x="871.0" y="329.05" width="22.199999999999978" height="2.90" fill="#420000"/>
<rect x="871.0" y="333.05" width="22.199999999999978" height="6.90" fill="#420000"/>
<rect x="871.0" y="341.05" width="22.199999999999978" height="6.90" fill="#420000"/>
<rect x="871.0" y="349.05" width="22.199999999999978" height="6.90" fill="#420000"/>
<rect x="871.0" y="357.05" width="22.199999999999978" height="6.90" fill="#420000"/>
<rect x="871.0" y="365.05" width="22.199999999999978" height="6.90" fill="#420000"/>
<rect x="871.0" y="373.05" width="22.199999999999978" height="6.90" fill="#420000"/>
<rect x="871.0" y="381.05" width="22.199999999999978" height="6.90" fill="#420000"/>
<rect x="871.0" y="389.05" width="22.199999999999978" height="6.90" fill="#420000"/>
<rect x="871.0" y="397.05" width="22.199999999999978" height="6.90" fill="#420000"/>
<rect x="871.0" y="405.05" width="22.199999999999978" height="6.90" fill="#420000"/>
<rect x="871.0" y="413.05" width="22.199999999999978" height="6.90" fill="#420000"/>
<rect x="871.0" y="421.05" width="22.199999999999978" height="6.90" fill="#420000"/>
<rect x="871.0" y="429.05" width="22.199999999999978" height="6.90" fill="#420000"/>
<rect x="871.0" y="437.05" width="22.199999999999978" height="6.90" fill="#420000"/>
<rect x="871.0" y="445.05" width="22.199999999999978" height="6.90" fill="#404000"/>
<rect x="871.0" y="453.05" width="22.199999999999978" height="6.90" fill="#404000"/>
<rect x="871.0" y="461.05" width="22.199999999999978" height="6.90" fill="#e8f806"/>
<rect x="871.0" y="469.05" width="22.199999999999978" height="6.90" fill="#e8f806"/>
<rect x="871.0" y="477.05" width="22.199999999999978" height="6.90" fill="#30f806"/>
<rect x="871.0" y="485.05" width="22.199999999999978" height="6.90" fill="#30f806"/>
<rect x="871.0" y="493.05" width="22.199999999999978" height="6.90" fill="#30f806"/>
<rect x="871.0" y="501.05" width="22.199999999999978" height="6.90" fill="#30f806"/>
<rect x="871.0" y="509.05" width="22.199999999999978" height="6.90" fill="#30f806"/>
<rect x="871.0" y="517.05" width="22.199999999999978" height="6.90" fill="#30f806"/>
<rect x="871.0" y="525.05" width="22.199999999999978" height="6.90" fill="#30f806"/>
<rect x="871.0" y="533.05" width="22.199999999999978" height="6.90" fill="#30f806"/>
<rect x="871.0" y="541.05" width="22.199999999999978" height="6.90" fill="#30f806"/>
<rect x="871.0" y="549.05" width="22.199999999999978" height="6.90" fill="#30f806"/>
<rect x="871.0" y="557.05" width="22.199999999999978" height="6.90" fill="#30f806"/>
<rect x="871.0" y="565.05" width="22.199999999999978" height="6.90" fill="#30f806"/>
<rect x="871.0" y="573.05" width="22.199999999999978" height="6.90" fill="#30f806"/>
<rect x="871.0" y="581.05" width="22.199999999999978" height="6.90" fill="#30f806"/>
<rect x="871.0" y="589.05" width="22.199999999999978" height="6.90" fill="#30f806"/>
<rect x="871.0" y="597.05" width="22.199999999999978" height="6.90" fill="#30f806"/>
<rect x="871.0" y="605.05" width="22.199999999999978" height="6.90" fill="#30f806"/>
<rect x="871.0" y="613.05" width="22.199999999999978" height="6.90" fill="#30f806"/>
<rect x="871.0" y="621.05" width="22.199999999999978" height="6.90" fill="#30f806"/>
<rect x="871.0" y="629.05" width="22.199999999999978" height="6.90" fill="#30f806"/>
<rect x="871.0" y="637.05" width="22.199999999999978" height="6.90" fill="#30f806"/>
<rect x="871.0" y="645.05" width="22.199999999999978" height="6.90" fill="#30f806"/>
<rect x="871.0" y="653.05" width="22.199999999999978" height="6.90" fill="#30f806"/>
<rect x="871.0" y="661.05" width="22.199999999999978" height="6.90" fill="#30f806"/>
<rect x="871.0" y="669.05" width="22.199999999999978" height="22.90" fill="#30f806"/>
<rect x="871.0" y="693.05" width="22.199999999999978" height="38.90" fill="#30f806"/>
<rect x="871.0" y="733.05" width="22.199999999999978" height="38.90" fill="#30f806"/>
<rect x="871.0" y="773.05" width="22.199999999999978" height="38.90" fill="#30f806"/>
<rect x="871.0" y="813.05" width="22.199999999999978" height="38.80" fill="#30f806"/>
<rect x="871.0" y="379.3" width="22.199999999999978" height="2.4" fill="#f80000"/>
<rect x="870.6999999999999" y="332.6" width="22.799999999999976" height="7.9" fill="#420000" stroke="#fff" stroke-width="1.1"/>
<rect x="870.6999999999999" y="428.6" width="22.799999999999976" height="7.9" fill="#420000" stroke="#fff" stroke-width="1.1"/>
<path d="M859.2 316.5H867.6M896.4 316.5H904.6" stroke="#9a9a9a" stroke-width="1"/>
<text x="846" y="320.40" font-size="9.2" text-anchor="middle" fill="#fff">+20</text>
<text x="918" y="320.40" font-size="9.2" text-anchor="middle" fill="#fff">+20</text>
<path d="M859.2 348.5H867.6M896.4 348.5H904.6" stroke="#9a9a9a" stroke-width="1"/>
<text x="846" y="352.40" font-size="9.2" text-anchor="middle" fill="#fff">+16</text>
<text x="918" y="352.40" font-size="9.2" text-anchor="middle" fill="#fff">+16</text>
<path d="M859.2 380.5H867.6M896.4 380.5H904.6" stroke="#9a9a9a" stroke-width="1"/>
<text x="846" y="384.40" font-size="9.2" text-anchor="middle" fill="#fff">+12</text>
<text x="918" y="384.40" font-size="9.2" text-anchor="middle" fill="#fff">+12</text>
<path d="M859.2 412.5H867.6M896.4 412.5H904.6" stroke="#9a9a9a" stroke-width="1"/>
<text x="846" y="416.40" font-size="9.2" text-anchor="middle" fill="#fff">+8</text>
<text x="918" y="416.40" font-size="9.2" text-anchor="middle" fill="#fff">+8</text>
<path d="M859.2 444.5H867.6M896.4 444.5H904.6" stroke="#9a9a9a" stroke-width="1"/>
<text x="846" y="448.40" font-size="9.2" text-anchor="middle" fill="#fff">+4</text>
<text x="918" y="448.40" font-size="9.2" text-anchor="middle" fill="#fff">+4</text>
<path d="M859.2 476.5H867.6M896.4 476.5H904.6" stroke="#9a9a9a" stroke-width="1"/>
<text x="846" y="480.40" font-size="9.2" text-anchor="middle" fill="#fff">0</text>
<text x="918" y="480.40" font-size="9.2" text-anchor="middle" fill="#fff">0</text>
<path d="M859.2 508.5H867.6M896.4 508.5H904.6" stroke="#9a9a9a" stroke-width="1"/>
<text x="846" y="512.40" font-size="9.2" text-anchor="middle" fill="#fff">-4</text>
<text x="918" y="512.40" font-size="9.2" text-anchor="middle" fill="#fff">-4</text>
<path d="M859.2 540.5H867.6M896.4 540.5H904.6" stroke="#9a9a9a" stroke-width="1"/>
<text x="846" y="544.40" font-size="9.2" text-anchor="middle" fill="#fff">-8</text>
<text x="918" y="544.40" font-size="9.2" text-anchor="middle" fill="#fff">-8</text>
<path d="M859.2 572.5H867.6M896.4 572.5H904.6" stroke="#9a9a9a" stroke-width="1"/>
<text x="846" y="576.40" font-size="9.2" text-anchor="middle" fill="#fff">-12</text>
<text x="918" y="576.40" font-size="9.2" text-anchor="middle" fill="#fff">-12</text>
<path d="M859.2 604.5H867.6M896.4 604.5H904.6" stroke="#9a9a9a" stroke-width="1"/>
<text x="846" y="608.40" font-size="9.2" text-anchor="middle" fill="#fff">-16</text>
<text x="918" y="608.40" font-size="9.2" text-anchor="middle" fill="#fff">-16</text>
<path d="M859.2 636.5H867.6M896.4 636.5H904.6" stroke="#9a9a9a" stroke-width="1"/>
<text x="846" y="640.40" font-size="9.2" text-anchor="middle" fill="#fff">-20</text>
<text x="918" y="640.40" font-size="9.2" text-anchor="middle" fill="#fff">-20</text>
<path d="M859.2 668.5H867.6M896.4 668.5H904.6" stroke="#9a9a9a" stroke-width="1"/>
<text x="846" y="672.40" font-size="9.2" text-anchor="middle" fill="#fff">-24</text>
<text x="918" y="672.40" font-size="9.2" text-anchor="middle" fill="#fff">-24</text>
<path d="M859.2 692.5H867.6M896.4 692.5H904.6" stroke="#9a9a9a" stroke-width="1"/>
<text x="846" y="696.40" font-size="9.2" text-anchor="middle" fill="#fff">-30</text>
<text x="918" y="696.40" font-size="9.2" text-anchor="middle" fill="#fff">-30</text>
<path d="M859.2 732.5H867.6M896.4 732.5H904.6" stroke="#9a9a9a" stroke-width="1"/>
<text x="846" y="736.40" font-size="9.2" text-anchor="middle" fill="#fff">-40</text>
<text x="918" y="736.40" font-size="9.2" text-anchor="middle" fill="#fff">-40</text>
<path d="M859.2 772.5H867.6M896.4 772.5H904.6" stroke="#9a9a9a" stroke-width="1"/>
<text x="846" y="776.40" font-size="9.2" text-anchor="middle" fill="#fff">-50</text>
<text x="918" y="776.40" font-size="9.2" text-anchor="middle" fill="#fff">-50</text>
<path d="M859.2 812.5H867.6M896.4 812.5H904.6" stroke="#9a9a9a" stroke-width="1"/>
<text x="846" y="816.40" font-size="9.2" text-anchor="middle" fill="#fff">-60</text>
<text x="918" y="816.40" font-size="9.2" text-anchor="middle" fill="#fff">-60</text>
<text x="848.3" y="851.2" font-size="9.6" letter-spacing=".45" text-anchor="middle" fill="#fff">LK|dB</text>
<text x="916.3" y="851.2" font-size="9.6" letter-spacing=".45" text-anchor="middle" fill="#fff">LK|dB</text>
<rect x="829.5" y="865.6" width="104.6" height="11.8" fill="url(#lr)" stroke="#3e3e3e" stroke-width="1"/>
<text x="833" y="875.3" font-size="9.3" fill="#fff">L</text><text x="926.4" y="875.3" font-size="9.3" fill="#fff">R</text>
<rect x="876.2" y="866.2" width="2.4" height="10.6" fill="#f40000"/>
<path d="M882.3 865.6V877.4M880.6 865.6H884M880.6 877.4H884" stroke="#fff" stroke-width="1.2" fill="none"/>
<rect x="829.5" y="882.8" width="104.6" height="11.4" fill="url(#corr)" stroke="#3e3e3e" stroke-width="1"/>
<text x="832.6" y="892" font-size="9.3" fill="#fff">-1</text><text x="882.2" y="892" font-size="9.3" text-anchor="middle" fill="#fff">0</text><text x="931.4" y="892" font-size="9.3" text-anchor="end" fill="#fff">+1</text>
<rect x="925.4" y="883.4" width="2.4" height="10.2" fill="#f40000"/>
<rect x="949.00" y="268.20" width="60.10" height="19.80" rx="9.90" fill="url(#g_green)" stroke="#1b1b1b" stroke-opacity=".55" stroke-width=".8"/><rect x="952.80" y="269.20" width="52.50" height="8.32" rx="5.15" fill="url(#gloss_green)"/><text x="979.25" y="282.02" font-size="9.5" letter-spacing=".42" text-anchor="middle" fill="#000">K-20</text>
<rect x="949.00" y="293.30" width="60.10" height="19.80" rx="9.90" fill="url(#g_grey)" stroke="#1b1b1b" stroke-opacity=".55" stroke-width=".8"/><rect x="952.80" y="294.30" width="52.50" height="8.32" rx="5.15" fill="url(#gloss_grey)"/><text x="979.25" y="307.12" font-size="9.5" letter-spacing=".42" text-anchor="middle" fill="#000">K-14</text>
<rect x="949.00" y="318.30" width="60.10" height="19.80" rx="9.90" fill="url(#g_grey)" stroke="#1b1b1b" stroke-opacity=".55" stroke-width=".8"/><rect x="952.80" y="319.30" width="52.50" height="8.32" rx="5.15" fill="url(#gloss_grey)"/><text x="979.25" y="332.12" font-size="9.5" letter-spacing=".42" text-anchor="middle" fill="#000">K-12</text>
<rect x="949.00" y="343.30" width="60.10" height="19.80" rx="9.90" fill="url(#g_grey)" stroke="#1b1b1b" stroke-opacity=".55" stroke-width=".8"/><rect x="952.80" y="344.30" width="52.50" height="8.32" rx="5.15" fill="url(#gloss_grey)"/><text x="979.25" y="357.12" font-size="9.5" letter-spacing=".42" text-anchor="middle" fill="#000">Normal</text>
<rect x="949.00" y="383.20" width="60.10" height="19.80" rx="9.90" fill="url(#g_green)" stroke="#1b1b1b" stroke-opacity=".55" stroke-width=".8"/><rect x="952.80" y="384.20" width="52.50" height="8.32" rx="5.15" fill="url(#gloss_green)"/><text x="979.25" y="397.02" font-size="9.5" letter-spacing=".42" text-anchor="middle" fill="#000">ITU-R</text>
<rect x="949.00" y="408.40" width="60.10" height="19.80" rx="9.90" fill="url(#g_grey)" stroke="#1b1b1b" stroke-opacity=".55" stroke-width=".8"/><rect x="952.80" y="409.40" width="52.50" height="8.32" rx="5.15" fill="url(#gloss_grey)"/><text x="979.25" y="422.22" font-size="9.5" letter-spacing=".42" text-anchor="middle" fill="#000">RMS</text>
<rect x="949.00" y="448.30" width="60.10" height="19.80" rx="9.90" fill="url(#g_yellow)" stroke="#1b1b1b" stroke-opacity=".55" stroke-width=".8"/><rect x="952.80" y="449.30" width="52.50" height="8.32" rx="5.15" fill="url(#gloss_yellow)"/><text x="979.25" y="462.12" font-size="9.5" letter-spacing=".42" text-anchor="middle" fill="#000">Hold</text>
<rect x="949.00" y="473.20" width="60.10" height="19.80" rx="9.90" fill="url(#g_yellow)" stroke="#1b1b1b" stroke-opacity=".55" stroke-width=".8"/><rect x="952.80" y="474.20" width="52.50" height="8.32" rx="5.15" fill="url(#gloss_yellow)"/><text x="979.25" y="487.02" font-size="9.5" letter-spacing=".42" text-anchor="middle" fill="#000">Peaks</text>
<rect x="949.00" y="498.30" width="60.10" height="19.80" rx="9.90" fill="url(#g_grey)" stroke="#1b1b1b" stroke-opacity=".55" stroke-width=".8"/><rect x="952.80" y="499.30" width="52.50" height="8.32" rx="5.15" fill="url(#gloss_grey)"/><text x="979.25" y="512.12" font-size="9.5" letter-spacing=".42" text-anchor="middle" fill="#000">Expand</text>
<rect x="949.00" y="538.20" width="60.10" height="19.80" rx="9.90" fill="url(#g_grey)" stroke="#1b1b1b" stroke-opacity=".55" stroke-width=".8"/><rect x="952.80" y="539.20" width="52.50" height="8.32" rx="5.15" fill="url(#gloss_grey)"/><text x="979.25" y="552.02" font-size="9.5" letter-spacing=".42" text-anchor="middle" fill="#000">Mono</text>
<rect x="949.00" y="563.40" width="60.10" height="19.80" rx="9.90" fill="url(#g_grey)" stroke="#1b1b1b" stroke-opacity=".55" stroke-width=".8"/><rect x="952.80" y="564.40" width="52.50" height="8.32" rx="5.15" fill="url(#gloss_grey)"/><text x="979.25" y="577.22" font-size="9.5" letter-spacing=".42" text-anchor="middle" fill="#000">Reset</text>
<rect x="949.00" y="850.20" width="60.10" height="19.80" rx="9.90" fill="url(#g_grey)" stroke="#1b1b1b" stroke-opacity=".55" stroke-width=".8"/><rect x="952.80" y="851.20" width="52.50" height="8.32" rx="5.15" fill="url(#gloss_grey)"/><text x="979.25" y="864.02" font-size="9.5" letter-spacing=".42" text-anchor="middle" fill="#000">Validate</text>
<rect x="949.00" y="875.30" width="60.10" height="19.80" rx="9.90" fill="url(#g_grey)" stroke="#1b1b1b" stroke-opacity=".55" stroke-width=".8"/><rect x="952.80" y="876.30" width="52.50" height="8.32" rx="5.15" fill="url(#gloss_grey)"/><text x="979.25" y="889.12" font-size="9.5" letter-spacing=".42" text-anchor="middle" fill="#000">About</text><path transform="translate(453.3,307.2)" d="M0 0V16.4L3.9 12.9L6.2 17.9L8.4 16.9L6.5 11.9L11.2 11.3Z" fill="#000" stroke="#fff" stroke-width="1.05" stroke-linejoin="round"/></svg>
</div></div>
<div class="abs" style="left:1259.6px;top:77.5px;width:16.4px;height:857px;border-radius:2px;background:linear-gradient(90deg,#595959,#616161);box-shadow:0 0 0 1px #4a4a4a"></div>
<div class="abs" style="left:1261.8px;top:443px;width:12.2px;height:268px;border-radius:1.5px;background:linear-gradient(90deg,#7aa5d8,#6a98cf 50%,#6d9bd2);border:1px solid #5a86bb;box-shadow:inset 0 0 0 .5px rgba(255,255,255,.25)"></div>
<svg class="abs" style="left:1264.5px;top:81.3px" width="6" height="6" viewBox="0 0 6 6"><path d="M3 .7L5.4 5.2H.6Z" fill="#a8a8a8" stroke="#d4d4d4" stroke-width=".6"/></svg>
<svg class="abs" style="left:1264.5px;top:922.6px" width="6" height="6" viewBox="0 0 6 6"><path d="M3 5.3L5.4 .8H.6Z" fill="#a8a8a8" stroke="#d4d4d4" stroke-width=".6"/></svg>
<div class="abs" style="left:0px;top:938.2px;width:1255px;height:17px;border-radius:2px;background:linear-gradient(#595959,#626262);box-shadow:0 0 0 1px #4a4a4a"></div>
<div class="abs" style="left:510px;top:941px;width:478.5px;height:12.2px;border-radius:1.5px;background:linear-gradient(#7eaadb,#6b98ce 50%,#6d9ad0);border:1px solid #5a86bb;box-shadow:inset 0 0 0 .5px rgba(255,255,255,.25)"></div>
<svg class="abs" style="left:4.7px;top:943.4px" width="6" height="6" viewBox="0 0 6 6"><path d="M.7 3L5.2 .6V5.4Z" fill="#a8a8a8" stroke="#d4d4d4" stroke-width=".6"/></svg>
<svg class="abs" style="left:1243.6px;top:943.5px" width="6" height="6" viewBox="0 0 6 6"><path d="M5.3 3L.8 .6V5.4Z" fill="#a8a8a8" stroke="#d4d4d4" stroke-width=".6"/></svg>
</div>
</body></html>
